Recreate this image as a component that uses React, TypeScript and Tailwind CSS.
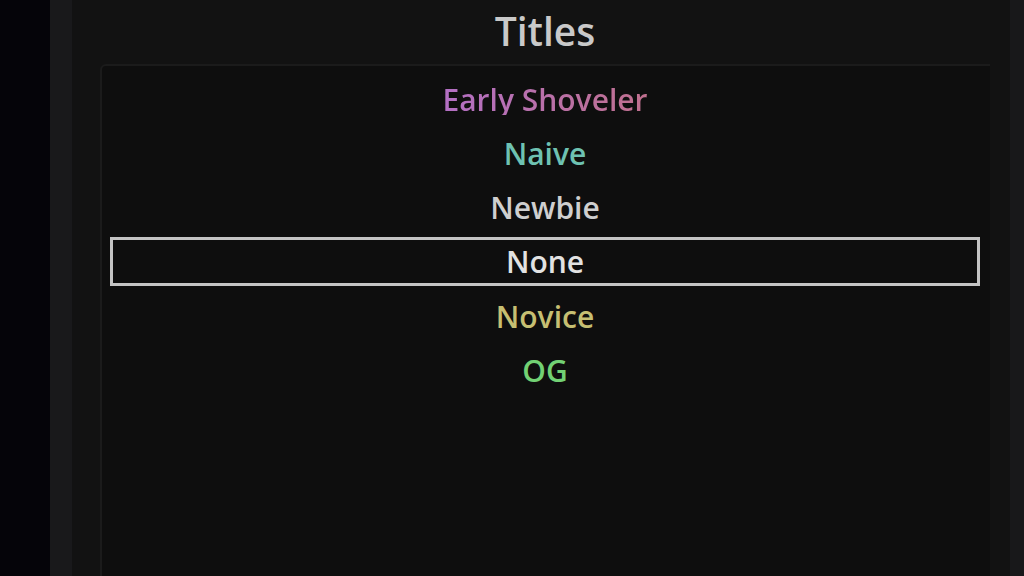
const titles = [
  { name: "Early Shoveler", className: "bg-gradient-to-r from-[#b36fc4] to-[#c0708e] bg-clip-text text-transparent" },
  { name: "Naive", className: "text-[#6ec2b2]" },
  { name: "Newbie", className: "text-[#cfcfcf]" },
  { name: "None", className: "text-[#e2e2e2]", selected: true },
  { name: "Novice", className: "text-[#c6bf72]" },
  { name: "OG", className: "text-[#72d174]" },
];

export default function App() {
  return (
    <div
      className="flex h-[576px] w-[1024px] overflow-hidden bg-[#050409]"
      style={{ fontFamily: '"Open Sans", "Noto Sans", sans-serif' }}
    >
      <div className="w-[50px] shrink-0" />
      <div className="flex flex-1 border-l-[22px] border-r-[14px] border-l-[#19191b] border-r-[#18181a] bg-[#121212]">
        <div className="flex flex-1 flex-col pl-[28px] pr-[20px]">
          <div className="flex h-[64px] items-center justify-center pb-[4px]">
            <h1 className="text-[39px] font-semibold leading-none text-[#c9c9c9]">Titles</h1>
          </div>
          <ul className="flex flex-1 flex-col rounded-tl-[6px] border-t-2 border-l-2 border-[#1b1b1b] bg-[#0e0e0e] pl-[8px] pr-[10px] pt-[7px]">
            {titles.map((t) => (
              <li
                key={t.name}
                className={`flex items-center justify-center ${
                  t.selected ? "mt-[2px] mb-[4px] h-[49px] border-[3px] border-[#c4c4c4]" : "h-[54px]"
                }`}
              >
                <span className={`text-[30px] font-semibold leading-none ${t.className}`}>{t.name}</span>
              </li>
            ))}
          </ul>
        </div>
      </div>
    </div>
  );
}
